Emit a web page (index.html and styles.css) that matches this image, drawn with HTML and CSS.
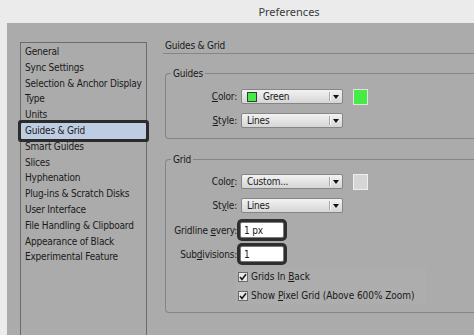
FILE: index.html
```html
<!DOCTYPE html>
<html lang="en">
<head>
    <meta charset="UTF-8">
    <meta name="viewport" content="width=device-width, initial-scale=1.0">
    <title>Preferences</title>
    <link rel="stylesheet" href="styles.css">
</head>
<body>
    <div class="window">
        <div class="titlebar">Preferences</div>
        <div class="main">
            <!-- Category list -->
            <ul class="categories">
                <li>General</li>
                <li>Sync Settings</li>
                <li>Selection &amp; Anchor Display</li>
                <li>Type</li>
                <li>Units</li>
                <li class="selected">Guides &amp; Grid</li>
                <li>Smart Guides</li>
                <li>Slices</li>
                <li>Hyphenation</li>
                <li>Plug-ins &amp; Scratch Disks</li>
                <li>User Interface</li>
                <li>File Handling &amp; Clipboard</li>
                <li>Appearance of Black</li>
                <li>Experimental Feature</li>
            </ul>

            <div class="pane">
                <div class="pane-title">Guides &amp; Grid</div>

                <div class="group guides">
                    <span class="group-label">Guides</span>
                    <div class="row">
                        <label class="field-label"><u>C</u>olor:</label>
                        <div class="select">
                            <span class="chip green"></span>
                            <span class="select-text">Green</span>
                            <span class="select-arrow"></span>
                        </div>
                        <span class="swatch green"></span>
                    </div>
                    <div class="row gap">
                        <label class="field-label"><u>S</u>tyle:</label>
                        <div class="select">
                            <span class="select-text">Lines</span>
                            <span class="select-arrow"></span>
                        </div>
                    </div>
                </div>

                <div class="group grid">
                    <span class="group-label">Grid</span>
                    <div class="row">
                        <label class="field-label">Colo<u>r</u>:</label>
                        <div class="select">
                            <span class="select-text">Custom...</span>
                            <span class="select-arrow"></span>
                        </div>
                        <span class="swatch custom"></span>
                    </div>
                    <div class="row gap">
                        <label class="field-label">St<u>y</u>le:</label>
                        <div class="select">
                            <span class="select-text">Lines</span>
                            <span class="select-arrow"></span>
                        </div>
                    </div>
                    <div class="row input-row first-input">
                        <label class="field-label">Gridline <u>e</u>very:</label>
                        <input class="text-input" type="text" value="1 px">
                    </div>
                    <div class="row input-row">
                        <label class="field-label">Sub<u>d</u>ivisions:</label>
                        <input class="text-input" type="text" value="1">
                    </div>
                    <div class="checks">
                        <div class="check-row">
                            <span class="checkbox"><svg viewBox="0 0 10 10" width="10" height="10"><path d="M2 5 L4 7.5 L8 2.2" fill="none" stroke="#1a1a1a" stroke-width="1.6"/></svg></span>
                            <span>Grids In <u>B</u>ack</span>
                        </div>
                        <div class="check-row">
                            <span class="checkbox"><svg viewBox="0 0 10 10" width="10" height="10"><path d="M2 5 L4 7.5 L8 2.2" fill="none" stroke="#1a1a1a" stroke-width="1.6"/></svg></span>
                            <span>Show <u>P</u>ixel Grid (Above 600% Zoom)</span>
                        </div>
                    </div>
                </div>
            </div>
        </div>
    </div>
</body>
</html>
```

FILE: styles.css
```css
body {
    margin: 0;
    overflow: hidden;
    background: #ebebeb;
    font-family: "DejaVu Sans Condensed", "DejaVu Sans", sans-serif;
    font-size: 10px;
    letter-spacing: -0.2px;
    color: #1a1a1a;
}
.window {
    height: 335px;
    overflow: hidden;
}
/* the dialog is wider than the shot, so the title sits right of centre */
.titlebar {
    height: 23px;
    line-height: 23px;
    padding-left: 104px;
    text-align: center;
    font-family: "Noto Sans", sans-serif;
    font-size: 11px;
    letter-spacing: 0;
    color: #3a3a3a;
}
.main {
    display: flex;
    margin-left: 7px;
    height: 312px;
    padding: 19px 0 0 13px;
    box-sizing: border-box;
    background: #ababab;
    overflow: hidden;
}

/* left list */
.categories {
    list-style: none;
    margin: 0;
    padding: 1px 0 0 0;
    width: 127px;
    height: 293px;
    box-sizing: border-box;
    border: 1px solid #6b6b6b;
    border-bottom: none;
    flex-shrink: 0;
}
.categories li {
    line-height: 15.8px;
    height: 15.8px;
    padding-left: 4px;
    white-space: nowrap;
}
.categories li.selected {
    background: #bfcde3;
    border-radius: 1px;
    box-shadow: 0 0 0 3px #2b2b2b;
    position: relative;
}

/* right pane */
.pane {
    flex: 1;
    margin-left: 16px;
    margin-top: -2px;
}
.pane-title {
    line-height: 12px;
    padding: 0 0 1px 2px;
    border-bottom: 1px solid #858585;
}
.group {
    position: relative;
    margin-left: 2px;
    border: 1px solid #858585;
    border-right: none;
    border-radius: 4px 0 0 4px;
}
.guides {
    margin-top: 19px;
    padding: 15px 0 10px 0;
}
.grid {
    margin-top: 20px;
    padding: 14px 0 8px 0;
}
.group-label {
    position: absolute;
    top: -7px;
    left: 5px;
    padding: 0 2px;
    line-height: 13px;
    background: #ababab;
}
.row {
    display: flex;
    align-items: center;
    height: 15px;
}
.row.gap {
    margin-top: 9px;
}
.field-label {
    width: 71px;
    margin-right: 4px;
    text-align: right;
    white-space: nowrap;
}

/* dropdowns */
.select {
    display: flex;
    align-items: center;
    width: 102px;
    height: 15px;
    box-sizing: border-box;
    border: 1px solid #858585;
    border-radius: 2px;
    background: linear-gradient(#f2f2f2, #d6d6d6);
    padding-left: 5px;
}
.select-text {
    flex: 1;
}
.select-arrow {
    width: 12px;
    height: 9px;
    border-left: 1px solid #a9a9a9;
    box-shadow: inset 1px 0 0 #f6f6f6;
    position: relative;
}
.select-arrow::after {
    content: "";
    position: absolute;
    left: 3px;
    top: 3px;
    border-left: 3px solid transparent;
    border-right: 3px solid transparent;
    border-top: 4px solid #111;
}
.chip {
    width: 10px;
    height: 10px;
    box-sizing: border-box;
    border: 1px solid #3a3a3a;
    margin-right: 6px;
}
.green {
    background: #46ec46;
}
.swatch {
    width: 15px;
    height: 16px;
    box-sizing: border-box;
    margin-left: 10px;
    border: 1px solid #e2e2e2;
}
.swatch.custom {
    background: #d6d6d6;
    border-color: #eeeeee;
}

/* inputs */
.input-row {
    height: 16px;
    margin-top: 8px;
}
.first-input {
    margin-top: 9px;
}
.text-input {
    width: 44px;
    height: 16px;
    box-sizing: border-box;
    margin: 0 0 0 -1px;
    padding: 0 3px;
    border: 1px solid #7a7a7a;
    border-radius: 2px;
    box-shadow: 0 0 0 3px #2e2e2e;
    background: #fff;
    font-family: inherit;
    font-size: 10px;
    letter-spacing: inherit;
    color: #1a1a1a;
}

/* checkboxes */
.checks {
    margin: 6px 0 0 69px;
    padding: 1px 0 1px 3px;
    width: 188px;
    background: #adadad;
    letter-spacing: -0.05px;
}
.check-row {
    display: flex;
    align-items: center;
    height: 15px;
}
.check-row + .check-row {
    margin-top: 4px;
}
.checkbox {
    width: 10px;
    height: 10px;
    box-sizing: border-box;
    border: 1px solid #6a6a6a;
    background: #e8e8e8;
    margin-right: 3px;
    display: flex;
}
.checkbox svg {
    margin: -1px;
}
```
